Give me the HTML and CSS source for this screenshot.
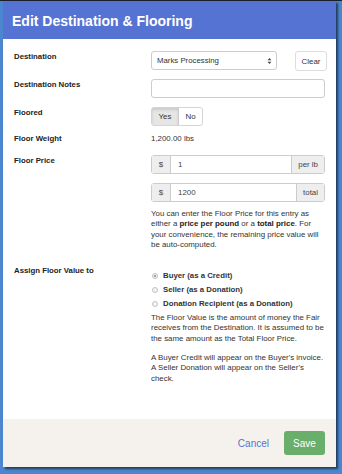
FILE: index.html
```html
<!DOCTYPE html>
<html>
<head>
<meta charset="utf-8">
<link rel="stylesheet" href="styles.css">
</head>
<body>
<div class="modal">
  <div class="modal-header">Edit Destination &amp; Flooring</div>
  <div class="modal-body">
    <div class="row r-dest">
      <div class="label">Destination</div>
      <div class="field">
        <div class="dest-line">
          <div class="select">Marks Processing<span class="caret"><svg width="5" height="8" viewBox="0 0 5 8"><path d="M0.6 3.2L2.5 1L4.4 3.2Z M0.6 4.8L2.5 7L4.4 4.8Z" fill="#444"/></svg></span></div>
          <div class="btn btn-clear">Clear</div>
        </div>
      </div>
    </div>
    <div class="row r-notes">
      <div class="label">Destination Notes</div>
      <div class="field"><div class="input notes"></div></div>
    </div>
    <div class="row r-floored">
      <div class="label">Floored</div>
      <div class="field">
        <div class="btn-group"><span class="seg active">Yes</span><span class="seg">No</span></div>
      </div>
    </div>
    <div class="row r-weight">
      <div class="label">Floor Weight</div>
      <div class="field value">1,200.00 lbs</div>
    </div>
    <div class="row r-price">
      <div class="label">Floor Price</div>
      <div class="field">
        <div class="igroup"><span class="addon">$</span><span class="ival">1</span><span class="addon right">per lb</span></div>
        <div class="igroup second"><span class="addon">$</span><span class="ival">1200</span><span class="addon right">total</span></div>
        <p class="help p-price">You can enter the Floor Price for this entry as<br>either a <b>price per pound</b> or a <b>total price</b>. For<br>your convenience, the remaining price value will<br>be auto-computed.</p>
      </div>
    </div>
    <div class="row r-assign">
      <div class="label">Assign Floor Value to</div>
      <div class="field">
        <div class="radios">
          <div class="radio"><span class="dot checked"></span><b>Buyer (as a Credit)</b></div>
          <div class="radio"><span class="dot"></span><b>Seller (as a Donation)</b></div>
          <div class="radio"><span class="dot"></span><b>Donation Recipient (as a Donation)</b></div>
        </div>
        <p class="help p-value">The Floor Value is the amount of money the Fair<br>receives from the Destination. It is assumed to be<br>the same amount as the Total Floor Price.</p>
        <p class="help p-credit">A Buyer Credit will appear on the Buyer's invoice.<br>A Seller Donation will appear on the Seller's<br>check.</p>
      </div>
    </div>
  </div>
  <div class="modal-footer">
    <span class="cancel">Cancel</span>
    <span class="btn-save">Save</span>
  </div>
</div>
</body>
</html>
```
FILE: styles.css
```css
html, body {
  margin: 0;
  padding: 0;
}
body {
  width: 342px;
  height: 474px;
  background: #4c86cf;
  font-family: "Liberation Sans", Arial, sans-serif;
  color: #222;
  overflow: hidden;
  border-top: 1px solid #1a1f2a;
  box-sizing: border-box;
}
.modal {
  margin-left: 3px;
  width: 333px;
  height: 466px;
  background: #fff;
  display: flex;
  flex-direction: column;
  box-shadow: 2px 2px 2px rgba(0,0,0,0.55);
}
.modal-header {
  height: 38px;
  background: #5573d3;
  color: #fff;
  font-weight: bold;
  font-size: 14px;
  display: flex;
  align-items: center;
  padding-left: 9px;
  padding-top: 1px;
  box-sizing: border-box;
  flex: none;
}
.modal-body {
  flex: 1;
  padding: 12px 0 0 11px;
  box-sizing: border-box;
}
.row {
  display: flex;
}
.label {
  width: 137px;
  flex: none;
  font-size: 7.8px;
  line-height: 12px;
  font-weight: bold;
  color: #222;
}
.field {
  width: 174px;
  flex: none;
  font-size: 7.9px;
}
.dest-line {
  display: flex;
  gap: 18px;
  width: 176px;
}
.select {
  width: 126px;
  height: 19px;
  box-sizing: border-box;
  border: 1px solid #ccc;
  border-radius: 3px;
  font-size: 7.8px;
  padding-left: 5px;
  display: flex;
  align-items: center;
  justify-content: space-between;
  padding-right: 4px;
  color: #333;
}
.caret { display: flex; }
.btn {
  border: 1px solid #ddd;
  border-radius: 3px;
  background: #fff;
  display: flex;
  align-items: center;
  justify-content: center;
  font-size: 7.9px;
  color: #333;
}
.btn-clear {
  width: 32px;
  height: 20px;
  box-sizing: border-box;
}
.r-notes { margin-top: 8px; }
.input.notes {
  width: 174px;
  height: 19px;
  box-sizing: border-box;
  border: 1px solid #ccc;
  border-radius: 3px;
}
.r-floored { margin-top: 9px; }
.btn-group {
  display: inline-flex;
  border: 1px solid #d5d5d5;
  border-radius: 3px;
  height: 19px;
  box-sizing: border-box;
  font-size: 7.9px;
  color: #333;
}
.seg {
  display: flex;
  align-items: center;
  justify-content: center;
  width: 23px;
}
.seg.active {
  width: 26px;
  background: #e6e6e6;
  box-shadow: inset 0 2px 3px rgba(0,0,0,0.12);
  border-right: 1px solid #ccc;
}
.r-weight { margin-top: 7px; }
.value { font-size: 7.9px; line-height: 12px; color: #333; }
.r-price { margin-top: 10px; }
.igroup {
  display: flex;
  height: 19px;
  width: 174px;
  box-sizing: border-box;
  border: 1px solid #ccc;
  border-radius: 3px;
  font-size: 7.9px;
  color: #444;
}
.igroup.second { margin-top: 9px; }
.addon {
  width: 18px;
  background: #eee;
  display: flex;
  align-items: center;
  justify-content: center;
  border-right: 1px solid #ccc;
}
.addon.right {
  width: auto;
  padding: 0 6px;
  border-right: none;
  border-left: 1px solid #ccc;
}
.ival {
  flex: 1;
  display: flex;
  align-items: center;
  padding-left: 7px;
}
.help {
  margin: 0;
  font-size: 7.9px;
  line-height: 10.6px;
  color: #333;
  white-space: nowrap;
}
.help b { color: #222; }
.p-price { margin-top: 6.5px; }
.r-assign { margin-top: 14px; }
.radios { padding-top: 4px; }
.radio {
  display: flex;
  align-items: center;
  height: 14px;
  font-size: 7.8px;
  color: #333;
}
.dot {
  width: 6px;
  height: 6px;
  box-sizing: border-box;
  border: 1px solid #c2c2c2;
  border-radius: 50%;
  margin: 0 5px 0 1px;
  background: #f4f4f4;
  position: relative;
  flex: none;
}
.dot.checked::after {
  content: "";
  position: absolute;
  left: 1px;
  top: 1px;
  width: 2px;
  height: 2px;
  border-radius: 50%;
  background: #8a8a8a;
}
.p-value { margin-top: 2px; }
.p-credit { margin-top: 8px; }
.modal-footer {
  flex: none;
  height: 48px;
  background: #f5f2ee;
  display: flex;
  align-items: center;
  justify-content: flex-end;
  padding-right: 11px;
}
.cancel {
  color: #5573d3;
  font-size: 10px;
  margin-right: 15px;
}
.btn-save {
  width: 41px;
  height: 24px;
  background: #69ae6b;
  border-radius: 3px;
  color: #fff;
  font-size: 10px;
  display: flex;
  align-items: center;
  justify-content: center;
}
```
